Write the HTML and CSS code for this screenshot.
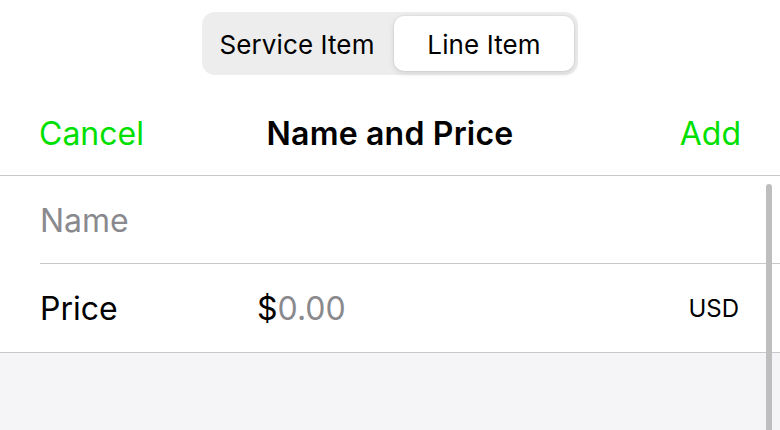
FILE: index.html
```html
<!DOCTYPE html>
<html>
<head>
<meta charset="utf-8">
<link rel="stylesheet" href="styles.css">
</head>
<body>
<div class="page">
  <header class="top">
    <div class="segmented">
      <div class="seg seg-left">Service Item</div>
      <div class="seg seg-right selected">Line Item</div>
    </div>
  </header>
  <nav class="nav">
    <span class="nav-btn nav-left">Cancel</span>
    <span class="nav-title">Name and Price</span>
    <span class="nav-btn nav-right">Add</span>
  </nav>
  <section class="form">
    <div class="row row-name">
      <span class="placeholder name-ph">Name</span>
    </div>
    <div class="row row-price">
      <span class="label">Price</span>
      <span class="value"><span class="dollar">$</span><span class="placeholder">0.00</span></span>
      <span class="currency">USD</span>
    </div>
  </section>
  <div class="rest"></div>
  <div class="scrollbar"></div>
</div>
</body>
</html>
```

FILE: styles.css
```css
* { box-sizing: border-box; }
html, body {
  margin: 0;
  padding: 0;
  width: 780px;
  height: 430px;
  overflow: hidden;
  background: #f5f5f7;
  font-family: Inter, "Noto Sans", "Liberation Sans", sans-serif;
  color: #000;
}
.page {
  position: relative;
  width: 780px;
  height: 430px;
  display: flex;
  flex-direction: column;
}
.top {
  background: #fff;
  height: 88px;
  display: flex;
  justify-content: center;
  padding-top: 12px;
}
.segmented {
  width: 376px;
  height: 63px;
  background: #ededed;
  border-radius: 13px;
  padding: 4px;
  display: flex;
}
.seg {
  display: flex;
  align-items: center;
  justify-content: center;
  font-size: 26px;
  letter-spacing: 0.1px;
  border-radius: 10px;
  padding-top: 2px;
}
.seg-left { width: 188px; padding-right: 6px; }
.seg-right { width: 180px; }
.selected {
  background: #fff;
  box-shadow: 0 2px 6px rgba(0,0,0,0.12), 0 0 0 1px rgba(0,0,0,0.03);
}
.nav {
  background: #fff;
  height: 88px;
  display: grid;
  grid-template-columns: 1fr auto 1fr;
  align-items: center;
  padding: 3px 39px 0 39px;
  border-bottom: 1px solid #c8c7cc;
}
.nav-btn {
  color: #00e000;
  font-size: 32px;
}
.nav-left { justify-self: start; }
.nav-right { justify-self: end; }
.nav-title {
  font-size: 32px;
  font-weight: 600;
  letter-spacing: 0.2px;
}
.form {
  background: #fff;
  border-bottom: 1px solid #c8c7cc;
}
.row {
  height: 88px;
  display: flex;
  align-items: center;
  padding-left: 40px;
  padding-right: 41px;
}
.row-name {
  height: 88px;
  border-bottom: 1px solid #c8c7cc;
  margin-left: 40px;
  padding-left: 0;
  padding-top: 2px;
}
.placeholder { color: #8a8a8e; }
.name-ph { font-size: 32px; }
.label {
  font-size: 32px;
  width: 217px;
}
.value {
  font-size: 32px;
  flex: 1;
}
.currency {
  font-size: 24px;
}
.rest {
  flex: 1;
  background: #f5f5f7;
}
.scrollbar {
  position: absolute;
  left: 766px;
  top: 184px;
  width: 6px;
  height: 250px;
  background: #bebebe;
  border-radius: 3px;
}
```
